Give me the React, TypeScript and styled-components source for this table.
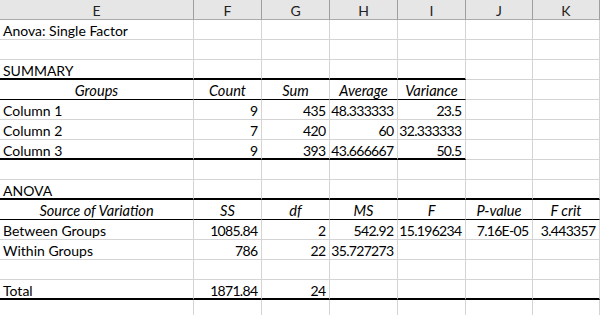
import React from "react";
import styled, { createGlobalStyle, css } from "styled-components";

const Global = createGlobalStyle`
  html, body { margin: 0; padding: 0; background: #ffffff; }
  body { font-family: "Lato", "Open Sans", sans-serif; }
`;

const COLS = ["E", "F", "G", "H", "I", "J", "K"];
const WIDTHS = [194, 68, 68, 68, 68, 67, 67];

const Sheet = styled.div`
  display: grid;
  grid-template-columns: ${WIDTHS.map((w) => `${w}px`).join(" ")};
  grid-auto-rows: 20px;
  width: 600px;
  height: 315px;
  overflow: hidden;
  background: #ffffff;
`;

const ColHead = styled.div`
  box-sizing: border-box;
  background: #e6e6e6;
  border-right: 1px solid #9e9e9e;
  border-bottom: 1px solid #ababab;
  display: flex;
  align-items: center;
  justify-content: center;
  font-family: "Lato", sans-serif;
  font-size: 14px;
  color: #222;
  padding-top: 1px;
`;

type Align = "left" | "right" | "center";
type Edge = "grid" | "thick" | "thin";

const Cell = styled.div<{ $align: Align; $italic: boolean; $numeric: boolean; $edge: Edge }>`
  box-sizing: border-box;
  border-right: 1px solid #d4d4d4;
  border-bottom: 1px solid #d4d4d4;
  display: flex;
  align-items: center;
  padding: 1px 3px 0 3px;
  font-family: "Lato", sans-serif;
  font-size: 14px;
  color: #000;
  white-space: nowrap;
  overflow: visible;
  justify-content: ${(p) =>
    p.$align === "left" ? "flex-start" : p.$align === "right" ? "flex-end" : "center"};
  ${(p) => p.$italic && css`font-style: italic; font-size: 14.6px;`}
  ${(p) => p.$numeric && css`letter-spacing: -0.7px; padding-right: 3.7px;`}
  ${(p) =>
    p.$edge === "thick" &&
    css`
      border-bottom: 2px solid #000;
      padding-top: 2px;
    `}
  ${(p) => p.$edge === "thin" && css`border-bottom: 1px solid #000;`}
`;

type Row = { cells: string[]; italic?: boolean; edge?: Edge; edgeSpan?: number };

const rows: Row[] = [
  { cells: ["Anova: Single Factor"] },
  { cells: [] },
  { cells: ["SUMMARY"], edge: "thick", edgeSpan: 5 },
  { cells: ["Groups", "Count", "Sum", "Average", "Variance"], italic: true, edge: "thin", edgeSpan: 5 },
  { cells: ["Column 1", "9", "435", "48.333333", "23.5"] },
  { cells: ["Column 2", "7", "420", "60", "32.333333"] },
  { cells: ["Column 3", "9", "393", "43.666667", "50.5"], edge: "thick", edgeSpan: 5 },
  { cells: [] },
  { cells: ["ANOVA"], edge: "thick", edgeSpan: 7 },
  {
    cells: ["Source of Variation", "SS", "df", "MS", "F", "P-value", "F crit"],
    italic: true,
    edge: "thin",
    edgeSpan: 7,
  },
  { cells: ["Between Groups", "1085.84", "2", "542.92", "15.196234", "7.16E-05", "3.443357"] },
  { cells: ["Within Groups", "786", "22", "35.727273"] },
  { cells: [] },
  { cells: ["Total", "1871.84", "24"], edge: "thick", edgeSpan: 7 },
  { cells: [] },
];

export default function App() {
  return (
    <>
      <Global />
      <Sheet>
        {COLS.map((c) => (
          <ColHead key={c}>{c}</ColHead>
        ))}
        {rows.map((row, r) =>
          COLS.map((_, c) => {
            const text = row.cells[c] ?? "";
            const italic = !!row.italic;
            const numeric = !italic && c > 0;
            const align: Align = italic ? "center" : c === 0 ? "left" : "right";
            const edge: Edge = row.edge && c < (row.edgeSpan ?? 0) ? row.edge : "grid";
            return (
              <Cell
                key={`${r}-${c}`}
                $align={align}
                $italic={italic}
                $numeric={numeric}
                $edge={edge}
              >
                {text}
              </Cell>
            );
          })
        )}
      </Sheet>
    </>
  );
}
